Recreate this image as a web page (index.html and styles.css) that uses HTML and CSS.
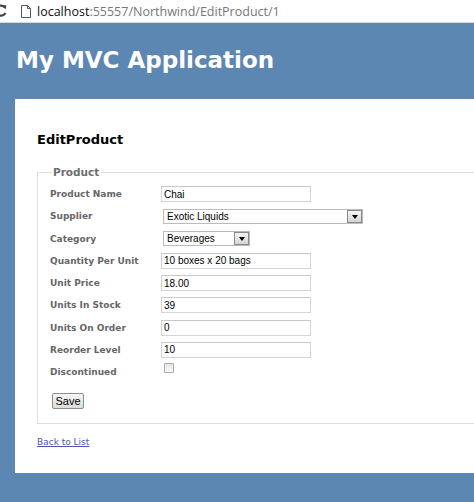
FILE: index.html
```html
<!DOCTYPE html>
<html lang="en">
  <head>
    <meta charset="UTF-8" />
    <title>EditProduct</title>
    <link rel="stylesheet" href="styles.css">
  </head>
  <body>
    <div class="address-bar">
      <svg class="reload" width="12" height="14" viewBox="0 0 12 14">
        <path d="M10 3.5 A5 5 0 1 0 10.5 9" fill="none" stroke="#444" stroke-width="2.2" />
        <path d="M7 1 L11.5 1.5 L10.5 5.5 Z" fill="#444" />
      </svg>
      <span class="url-box">
        <svg class="page-icon" width="10" height="13" viewBox="0 0 10 13">
          <path d="M0.5 0.5 H6.5 L9.5 3.5 V12.5 H0.5 Z" fill="#fff" stroke="#555" />
          <path d="M6.5 0.5 V3.5 H9.5" fill="none" stroke="#555" />
        </svg>
        <span class="host">localhost</span><span class="path">:55557/Northwind/EditProduct/1</span>
      </span>
    </div>

    <div class="header">
      <h1>My MVC Application</h1>
    </div>

    <div class="main">
      <h2>EditProduct</h2>

      <form>
        <fieldset>
          <legend>Product</legend>
          <div class="fields">
            <label>Product Name</label>
            <input type="text" value="Chai" />

            <label>Supplier</label>
            <span class="select wide">
              <select><option>Exotic Liquids</option></select>
            </span>

            <label>Category</label>
            <span class="select narrow">
              <select><option>Beverages</option></select>
            </span>

            <label>Quantity Per Unit</label>
            <input type="text" value="10 boxes x 20 bags" />

            <label>Unit Price</label>
            <input type="text" value="18.00" />

            <label>Units In Stock</label>
            <input type="text" value="39" />

            <label>Units On Order</label>
            <input type="text" value="0" />

            <label>Reorder Level</label>
            <input type="text" value="10" />

            <label>Discontinued</label>
            <span class="check"><input type="checkbox" /></span>
          </div>

          <button type="submit" class="save">Save</button>
        </fieldset>
      </form>

      <p class="back"><a href="#">Back to List</a></p>
    </div>
  </body>
</html>
```

FILE: styles.css
```css
html, body {
  margin: 0;
  padding: 0;
  overflow: hidden;
}
body {
  width: 474px;
  height: 502px;
  background: #5c87b2;
  font-family: "DejaVu Sans", Verdana, sans-serif;
}
.address-bar {
  height: 22px;
  background: #fff;
  border-bottom: 1px solid #d8d8d8;
  display: flex;
  align-items: center;
  overflow: hidden;
}
.reload {
  margin-left: -5px;
  flex: none;
}
.url-box {
  display: flex;
  align-items: center;
  flex: none;
  margin-left: 14px;
  font-family: "Open Sans", "Liberation Sans", sans-serif;
  font-size: 12.5px;
}
.page-icon {
  flex: none;
  margin-right: 6px;
}
.host {
  color: #111;
}
.path {
  color: #777;
}
.header {
  height: 76px;
  padding-left: 16px;
  display: flex;
  align-items: center;
}
.header h1 {
  margin: 0 0 3px;
  color: #fff;
  font-size: 23px;
  font-weight: bold;
}
.main {
  margin-left: 15px;
  width: 560px;
  height: 374px;
  background: #fff;
  padding: 1px 0 0 22px;
  box-sizing: border-box;
}
.main h2 {
  margin: 32px 0 0;
  font-size: 13px;
  font-weight: bold;
  color: #000;
}
form {
  margin-top: 19px;
}
fieldset {
  margin: 0;
  border: 1px solid #ddd;
  padding: 5px 0 14px 12px;
}
legend {
  margin-left: 2px;
  padding: 0 2px 0 1px;
  font-size: 10.5px;
  font-weight: bold;
  color: #6e6e6e;
}
.fields {
  display: grid;
  grid-template-columns: 111px auto;
  grid-auto-rows: 22.25px;
  align-items: center;
  justify-items: start;
}
.fields label {
  font-size: 9px;
  font-weight: bold;
  color: #666;
}
.fields input[type="text"] {
  width: 150px;
  height: 16px;
  box-sizing: border-box;
  margin: 0;
  padding: 0 2px;
  border: 1px solid #d4d4d4;
  border-top-color: #c8c8c8;
  font-family: "Liberation Sans", Arial, sans-serif;
  font-size: 10px;
  color: #000;
}
.select {
  position: relative;
  display: block;
  margin-left: 2px;
  height: 15px;
}
.select.wide {
  width: 200px;
}
.select.narrow {
  width: 87px;
}
.select select {
  appearance: none;
  display: block;
  width: 100%;
  height: 15px;
  box-sizing: border-box;
  margin: 0;
  padding: 0 3px;
  border: 1px solid #bbb;
  background: #fff;
  font-family: "Liberation Sans", Arial, sans-serif;
  font-size: 10px;
  color: #000;
  border-radius: 0;
}
.select::after {
  content: "";
  position: absolute;
  right: 1px;
  top: 1px;
  width: 13px;
  height: 11px;
  border: 1px solid #888;
  background: linear-gradient(#f4f4f4, #d4d4d4);
}
.select::before {
  content: "";
  position: absolute;
  z-index: 1;
  right: 5px;
  top: 6px;
  border-left: 3px solid transparent;
  border-right: 3px solid transparent;
  border-top: 4px solid #000;
}
.check input {
  appearance: none;
  margin: 0 0 0 3px;
  width: 10px;
  height: 10px;
  display: block;
  position: relative;
  top: -4px;
  border: 1px solid #a8a8a8;
  border-radius: 1px;
  background: linear-gradient(#e4e4e4, #fafafa);
}
.save {
  margin: 10px 0 0 2px;
  width: 32px;
  height: 16px;
  padding: 0;
  font-family: "Liberation Sans", Arial, sans-serif;
  font-size: 11px;
  color: #000;
  border: 1px solid #8e8e8e;
  border-radius: 2px;
  background: linear-gradient(#f6f6f6, #dcdcdc);
}
.back {
  margin: 13px 0 0;
  font-size: 9px;
}
.back a {
  color: #4d57b0;
}
```
